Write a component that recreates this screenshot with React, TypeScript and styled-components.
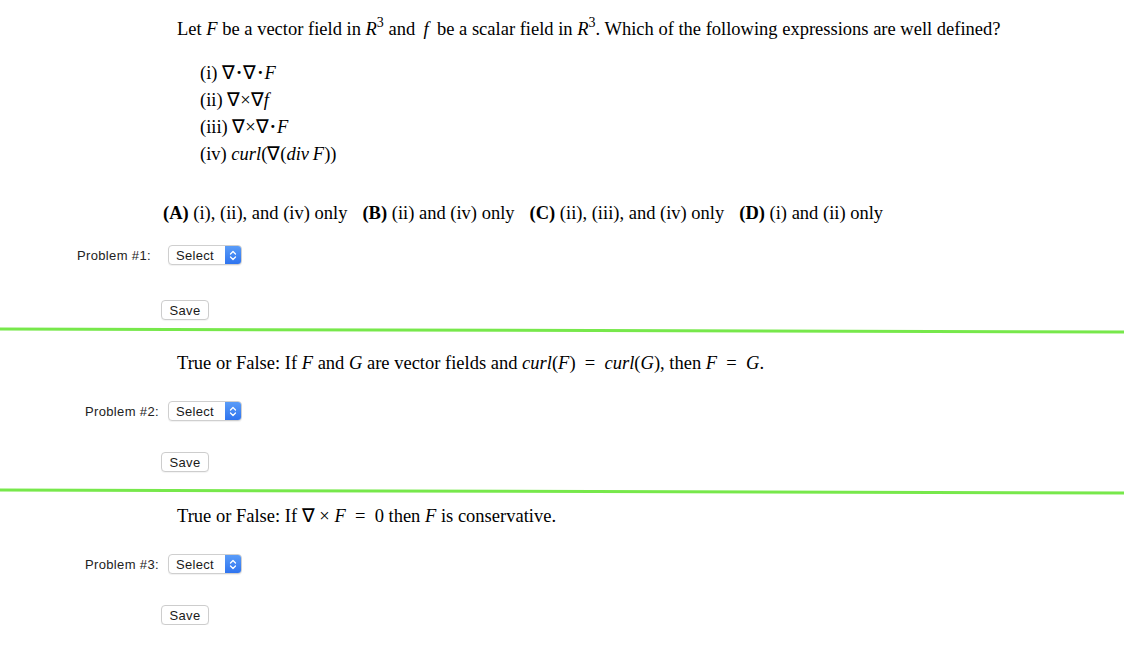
import styled, { createGlobalStyle } from "styled-components"

const GlobalStyle = createGlobalStyle`
  html, body {
    margin: 0;
    padding: 0;
    background: #ffffff;
  }
  body {
    font-family: "Liberation Serif", "Times New Roman", serif;
    color: #000000;
  }
`

const Page = styled.div`
  width: 1124px;
  display: flex;
  flex-direction: column;
`

const Problem = styled.section<{ top: number }>`
  display: flex;
  flex-direction: column;
  padding-top: ${(p) => p.top}px;
`

const Question = styled.p`
  margin: 0 0 0 177px;
  font-size: 18.5px;
  line-height: 27px;
  white-space: nowrap;
`

const Parts = styled.div`
  display: flex;
  flex-direction: column;
  margin: 16.5px 0 0 200px;
  font-size: 18.5px;
  line-height: 27px;
`

const Choices = styled.div`
  display: flex;
  gap: 15px;
  margin: 32px 0 0 163px;
  font-size: 18.5px;
  line-height: 27px;
  white-space: nowrap;
`

const Choice = styled.span`
  b {
    font-weight: 700;
  }
`

const Sup = styled.sup`
  font-size: 14px;
  line-height: 0;
  vertical-align: 8px;
`

const Dot = styled.span`
  font-weight: 700;
  margin: 0 1px;
`

const AnswerRow = styled.div<{ gap: number }>`
  display: flex;
  align-items: center;
  margin-top: ${(p) => p.gap}px;
  height: 20px;
`

const Label = styled.span<{ left: number; width: number }>`
  margin-left: ${(p) => p.left}px;
  width: ${(p) => p.width}px;
  font-family: "Liberation Sans", Arial, sans-serif;
  font-size: 13px;
  letter-spacing: 0.35px;
  color: #222;
`

const SelectBox = styled.div`
  display: flex;
  align-items: stretch;
  width: 74px;
  height: 20px;
  box-sizing: border-box;
  border: 1px solid #cfcfcf;
  border-radius: 4px;
  background: #fff;
  box-shadow: 0 1px 1px rgba(0, 0, 0, 0.06);
  overflow: hidden;
  font-family: "Liberation Sans", Arial, sans-serif;
  font-size: 13px;
  color: #1a1a1a;
`

const SelectText = styled.span`
  flex: 1;
  display: flex;
  align-items: center;
  padding-left: 7px;
  letter-spacing: 0.3px;
`

const SelectArrow = styled.span`
  width: 16px;
  display: flex;
  align-items: center;
  justify-content: center;
  background: linear-gradient(#5a9cf8, #2f74ef);
`

const SaveRow = styled.div<{ gap: number }>`
  display: flex;
  margin: ${(p) => p.gap}px 0 0 161px;
`

const SaveButton = styled.button`
  width: 48px;
  height: 20px;
  box-sizing: border-box;
  padding: 0;
  border: 1px solid #cdcdcd;
  border-radius: 4px;
  background: #fff;
  box-shadow: 0 1px 1px rgba(0, 0, 0, 0.05);
  font-family: "Liberation Sans", Arial, sans-serif;
  font-size: 13px;
  letter-spacing: 0.3px;
  color: #1a1a1a;
`

const Divider = styled.hr<{ gap: number }>`
  margin: ${(p) => p.gap}px 0 0 0;
  width: 1124px;
  height: 3px;
  border: none;
  background: #77e84b;
  transform: rotate(0.15deg);
`

const Chevrons = () => (
  <svg width="8" height="11" viewBox="0 0 8 11" fill="none">
    <path d="M1.5 4 L4 1.5 L6.5 4" stroke="#fff" strokeWidth="1.3" strokeLinecap="round" strokeLinejoin="round" />
    <path d="M1.5 7 L4 9.5 L6.5 7" stroke="#fff" strokeWidth="1.3" strokeLinecap="round" strokeLinejoin="round" />
  </svg>
)

function Answer({ n, gap, labelLeft, labelWidth }: { n: number; gap: number; labelLeft: number; labelWidth: number }) {
  return (
    <AnswerRow gap={gap}>
      <Label left={labelLeft} width={labelWidth}>
        Problem #{n}:
      </Label>
      <SelectBox>
        <SelectText>Select</SelectText>
        <SelectArrow>
          <Chevrons />
        </SelectArrow>
      </SelectBox>
    </AnswerRow>
  )
}

export default function App() {
  return (
    <Page>
      <GlobalStyle />
      <Problem top={16}>
        <Question>
          Let <i>F</i> be a vector field in <i>R</i>
          <Sup>3</Sup> and &thinsp;<i>f</i>&thinsp; be a scalar field in <i>R</i>
          <Sup>3</Sup>. Which of the following expressions are well defined?
        </Question>
        <Parts>
          <span>
            (i) ∇<Dot>·</Dot>∇<Dot>·</Dot>
            <i>F</i>
          </span>
          <span>(ii) ∇×∇<i>f</i></span>
          <span>
            (iii) ∇×∇<Dot>·</Dot>
            <i>F</i>
          </span>
          <span>
            (iv) <i>curl</i>(∇(<i>div</i>&thinsp;<i>F</i>))
          </span>
        </Parts>
        <Choices>
          <Choice>
            <b>(A)</b> (i), (ii), and (iv) only
          </Choice>
          <Choice>
            <b>(B)</b> (ii) and (iv) only
          </Choice>
          <Choice>
            <b>(C)</b> (ii), (iii), and (iv) only
          </Choice>
          <Choice>
            <b>(D)</b> (i) and (ii) only
          </Choice>
        </Choices>
        <Answer n={1} gap={18.5} labelLeft={77} labelWidth={91} />
        <SaveRow gap={35}>
          <SaveButton>Save</SaveButton>
        </SaveRow>
        <Divider gap={8.5} />
      </Problem>
      <Problem top={18}>
        <Question>
          True or False: If <i>F</i> and <i>G</i> are vector fields and <i>curl</i>(<i>F</i>) &nbsp;=&nbsp; <i>curl</i>(
          <i>G</i>), then <i>F</i> &nbsp;=&nbsp; <i>G</i>.
        </Question>
        <Answer n={2} gap={24.5} labelLeft={85} labelWidth={83} />
        <SaveRow gap={31}>
          <SaveButton>Save</SaveButton>
        </SaveRow>
        <Divider gap={17.5} />
      </Problem>
      <Problem top={10}>
        <Question>
          True or False: If ∇ × <i>F</i> &nbsp;=&nbsp; 0 then <i>F</i> is conservative.
        </Question>
        <Answer n={3} gap={24.5} labelLeft={85} labelWidth={83} />
        <SaveRow gap={31}>
          <SaveButton>Save</SaveButton>
        </SaveRow>
      </Problem>
    </Page>
  )
}
